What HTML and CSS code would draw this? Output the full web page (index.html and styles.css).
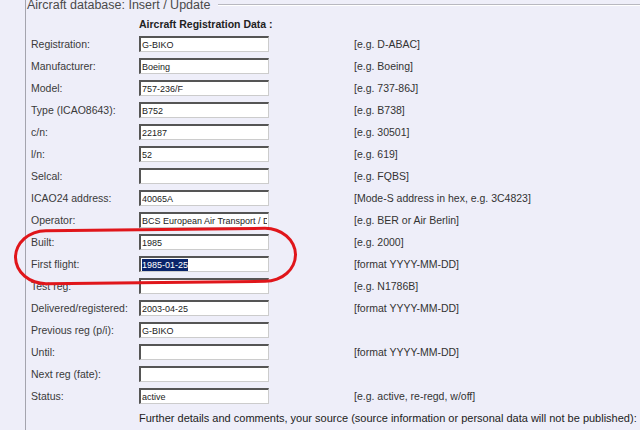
FILE: index.html
```html
<!DOCTYPE html>
<html lang="en">
<head>
    <meta charset="UTF-8">
    <title>Aircraft database: Insert / Update</title>
    <link rel="stylesheet" href="styles.css">
</head>
<body>
    <div class="panel">
        <div class="title">
            <span class="title-text">Aircraft database: Insert / Update</span>
            <span class="title-line"></span>
        </div>

        <div class="form">
            <div class="row head">
                <span></span>
                <span class="section">Aircraft Registration Data :</span>
            </div>
            <div class="row">
                <label>Registration:</label>
                <input type="text" value="G-BIKO">
                <span class="hint">[e.g. D-ABAC]</span>
            </div>
            <div class="row">
                <label>Manufacturer:</label>
                <input type="text" value="Boeing">
                <span class="hint">[e.g. Boeing]</span>
            </div>
            <div class="row">
                <label>Model:</label>
                <input type="text" value="757-236/F">
                <span class="hint">[e.g. 737-86J]</span>
            </div>
            <div class="row">
                <label>Type (ICAO8643):</label>
                <input type="text" value="B752">
                <span class="hint">[e.g. B738]</span>
            </div>
            <div class="row">
                <label>c/n:</label>
                <input type="text" value="22187">
                <span class="hint">[e.g. 30501]</span>
            </div>
            <div class="row">
                <label>l/n:</label>
                <input type="text" value="52">
                <span class="hint">[e.g. 619]</span>
            </div>
            <div class="row">
                <label>Selcal:</label>
                <input type="text" value="">
                <span class="hint">[e.g. FQBS]</span>
            </div>
            <div class="row">
                <label>ICAO24 address:</label>
                <input type="text" value="40065A">
                <span class="hint">[Mode-S address in hex, e.g. 3C4823]</span>
            </div>
            <div class="row">
                <label>Operator:</label>
                <input type="text" value="BCS European Air Transport / DHL">
                <span class="hint">[e.g. BER or Air Berlin]</span>
            </div>
            <div class="row">
                <label>Built:</label>
                <input type="text" value="1985">
                <span class="hint">[e.g. 2000]</span>
            </div>
            <div class="row">
                <label>First flight:</label>
                <div class="field"><span class="selected">1985-01-25</span></div>
                <span class="hint">[format YYYY-MM-DD]</span>
            </div>
            <div class="row">
                <label>Test reg:</label>
                <input type="text" value="">
                <span class="hint">[e.g. N1786B]</span>
            </div>
            <div class="row">
                <label>Delivered/registered:</label>
                <input type="text" value="2003-04-25">
                <span class="hint">[format YYYY-MM-DD]</span>
            </div>
            <div class="row">
                <label>Previous reg (p/i):</label>
                <input type="text" value="G-BIKO">
                <span class="hint"></span>
            </div>
            <div class="row">
                <label>Until:</label>
                <input type="text" value="">
                <span class="hint">[format YYYY-MM-DD]</span>
            </div>
            <div class="row">
                <label>Next reg (fate):</label>
                <input type="text" value="">
                <span class="hint"></span>
            </div>
            <div class="row">
                <label>Status:</label>
                <input type="text" value="active">
                <span class="hint">[e.g. active, re-regd, w/off]</span>
            </div>
            <div class="row">
                <span></span>
                <span class="note">Further details and comments, your source (source information or personal data will not be published):</span>
            </div>
        </div>

        <!-- red marker drawn over the screenshot -->
        <div class="marker"></div>
    </div>
</body>
</html>
```

FILE: styles.css
```css
* {
    box-sizing: border-box;
}

body {
    margin: 0;
    background: #eeeef9;
    font-family: "Liberation Sans", Arial, sans-serif;
    font-size: 10.5px;
    color: #333;
    overflow: hidden;
}

.panel {
    position: relative;
    margin: -1px 0 0 25px;
    border-left: 1px solid #a4a4ae;
    height: 431px;
}

.title {
    display: flex;
    align-items: flex-start;
}

.title-text {
    padding-left: 1px;
    font-size: 12.5px;
    line-height: 12px;
    color: #4a4a4a;
}

.title-line {
    flex: 1;
    margin: 5px 0 0 8px;
    border-top: 1px solid #b8b8c0;
    box-shadow: 0 1px 0 #fff;
}

.form {
    padding: 3px 0 0 5px;
}

.row {
    display: grid;
    grid-template-columns: 108px 214px 1fr;
    align-items: center;
    height: 22px;
}

.row.head {
    height: 19px;
}

.section {
    grid-column: 2 / 4;
    font-weight: bold;
    color: #222;
}

.row label {
    color: #3a3a3a;
    white-space: nowrap;
}

.row input,
.field {
    width: 130px;
    height: 16px;
    margin: 0;
    padding: 0 1px;
    border: 1px solid #ccc;
    border-top: 2px solid #555;
    border-left: 2px solid #555;
    background: #fff;
    font-family: "Liberation Sans", Arial, sans-serif;
    font-size: 9px;
    color: #222;
    outline: none;
}

.field {
    display: flex;
    align-items: center;
    overflow: hidden;
    white-space: nowrap;
}

.selected {
    background: #0a246a;
    color: #fff;
    line-height: 12px;
}

.hint {
    padding-left: 1px;
    color: #333;
    white-space: nowrap;
}

.note {
    grid-column: 2 / 4;
    white-space: nowrap;
    font-size: 11px;
    color: #222;
}

.marker {
    position: absolute;
    left: -12px;
    top: 229px;
    width: 283px;
    height: 56px;
    border: 3px solid #e0161b;
    border-radius: 32px / 28px;
    transform: rotate(-0.6deg);
}
```
